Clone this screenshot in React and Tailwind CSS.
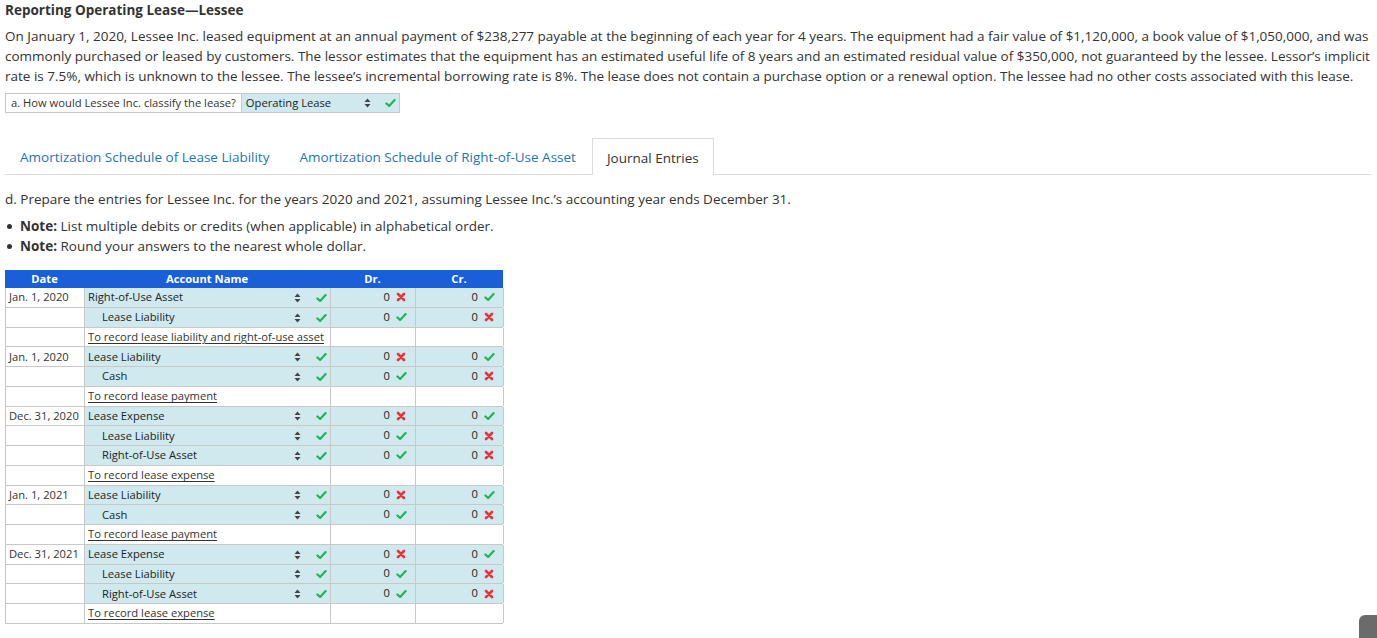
import React from 'react';

const Check = () => (
  <svg width="11" height="10" viewBox="0 0 12 10" className="inline-block">
    <path d="M1.5 5.5 L4.5 8.2 L10.5 1.8" fill="none" stroke="#22b455" strokeWidth="2.4" strokeLinecap="round" strokeLinejoin="round" />
  </svg>
);

const Cross = () => (
  <svg width="10" height="10" viewBox="0 0 10 10" className="inline-block">
    <path d="M2 2 L8 8 M8 2 L2 8" fill="none" stroke="#e8323c" strokeWidth="2.6" strokeLinecap="round" />
  </svg>
);

const Arrows = () => (
  <svg width="7" height="10" viewBox="0 0 7 10" className="inline-block">
    <path d="M3.5 0.5 L6.5 4 L0.5 4 Z" fill="#444" />
    <path d="M3.5 9.5 L6.5 6 L0.5 6 Z" fill="#444" />
  </svg>
);

const entries = [
  {
    date: 'Jan. 1, 2020',
    lines: [
      { name: 'Right-of-Use Asset', indent: false, dr: 'x', cr: 'v' },
      { name: 'Lease Liability', indent: true, dr: 'v', cr: 'x' },
    ],
    memo: 'To record lease liability and right-of-use asset',
  },
  {
    date: 'Jan. 1, 2020',
    lines: [
      { name: 'Lease Liability', indent: false, dr: 'x', cr: 'v' },
      { name: 'Cash', indent: true, dr: 'v', cr: 'x' },
    ],
    memo: 'To record lease payment',
  },
  {
    date: 'Dec. 31, 2020',
    lines: [
      { name: 'Lease Expense', indent: false, dr: 'x', cr: 'v' },
      { name: 'Lease Liability', indent: true, dr: 'v', cr: 'x' },
      { name: 'Right-of-Use Asset', indent: true, dr: 'v', cr: 'x' },
    ],
    memo: 'To record lease expense',
  },
  {
    date: 'Jan. 1, 2021',
    lines: [
      { name: 'Lease Liability', indent: false, dr: 'x', cr: 'v' },
      { name: 'Cash', indent: true, dr: 'v', cr: 'x' },
    ],
    memo: 'To record lease payment',
  },
  {
    date: 'Dec. 31, 2021',
    lines: [
      { name: 'Lease Expense', indent: false, dr: 'x', cr: 'v' },
      { name: 'Lease Liability', indent: true, dr: 'v', cr: 'x' },
      { name: 'Right-of-Use Asset', indent: true, dr: 'v', cr: 'x' },
    ],
    memo: 'To record lease expense',
  },
];

const Mark = ({ type }) => (type === 'v' ? <Check /> : <Cross />);

const AmountCell = ({ mark }) => (
  <div className="h-full bg-[#cfe9ef] border-r border-[#c8c8c8] flex items-center justify-end pr-[8px] gap-[6px]">
    <span>0</span>
    <span className="w-[11px] flex items-center">
      <Mark type={mark} />
    </span>
  </div>
);

const rowCls = 'grid grid-cols-[79px_246px_85px_88px] h-[19.76px] border-b border-[#c8c8c8]';

const Bullet = () => (
  <span className="w-[15px] shrink-0 flex items-center pl-[2px]">
    <span className="w-[5px] h-[5px] rounded-full bg-[#333]" />
  </span>
);

export default function App() {
  return (
    <div className="relative w-[1377px] h-[638px] overflow-hidden bg-white text-[#333] font-['Open_Sans',sans-serif] pl-[5px] pr-[6px]">
      <h1 className="text-[13.5px] font-bold leading-[20px]">Reporting Operating Lease—Lessee</h1>
      <p className="text-[13.5px] leading-[20px] mt-[6px]">
        On January 1, 2020, Lessee Inc. leased equipment at an annual payment of $238,277 payable at the beginning of each year for 4 years. The equipment had a fair value of $1,120,000, a book value of $1,050,000, and was commonly purchased or leased by customers. The lessor estimates that the equipment has an estimated useful life of 8 years and an estimated residual value of $350,000, not guaranteed by the lessee. Lessor’s implicit rate is 7.5%, which is unknown to the lessee. The lessee’s incremental borrowing rate is 8%. The lease does not contain a purchase option or a renewal option. The lessee had no other costs associated with this lease.
      </p>

      <div className="mt-[7px] flex h-[20px] w-[395px] border border-[#c8c8c8] text-[11.2px]">
        <div className="px-[5px] flex items-center border-r border-[#c8c8c8] shrink-0 whitespace-nowrap">a. How would Lessee Inc. classify the lease?</div>
        <div className="flex-1 bg-[#cfe9ef] flex items-center pl-[4px] text-[#222]">
          <span className="flex-1">Operating Lease</span>
          <span className="mr-[14px] flex items-center"><Arrows /></span>
          <span className="mr-[3px] flex items-center"><Check /></span>
        </div>
      </div>

      <div className="mt-[25px] flex items-end h-[37px] border-b border-[#dcdcdc] text-[13.5px]">
        <div className="pl-[15px] pr-[15px] h-full flex items-center pt-[3px] text-[#1f74b8]">Amortization Schedule of Lease Liability</div>
        <div className="pl-[15px] pr-[16px] h-full flex items-center pt-[3px] text-[#1f74b8]">Amortization Schedule of Right-of-Use Asset</div>
        <div className="px-[14px] h-[37px] flex items-center pt-[3px] border border-b-0 border-[#dcdcdc] bg-white -mb-px text-[#333]">Journal Entries</div>
      </div>

      <p className="text-[13.5px] leading-[20px] mt-[14px]">d. Prepare the entries for Lessee Inc. for the years 2020 and 2021, assuming Lessee Inc.’s accounting year ends December 31.</p>
      <ul className="mt-[7px] text-[13.5px] leading-[20px]">
        <li className="flex"><Bullet /><span><b className="font-bold">Note:</b> List multiple debits or credits (when applicable) in alphabetical order.</span></li>
        <li className="flex"><Bullet /><span><b className="font-bold">Note:</b> Round your answers to the nearest whole dollar.</span></li>
      </ul>

      <div className="mt-[14px] w-[498px] text-[11.2px] text-[#222]">
        <div className="grid grid-cols-[79px_246px_85px_88px] h-[18px] bg-[#1a5fd8] text-white font-bold">
          <div className="flex items-center justify-center">Date</div>
          <div className="flex items-center justify-center">Account Name</div>
          <div className="flex items-center justify-center">Dr.</div>
          <div className="flex items-center justify-center">Cr.</div>
        </div>
        <div className="border-l border-[#c8c8c8]">
          {entries.map((e, i) => (
            <React.Fragment key={i}>
              {e.lines.map((l, j) => (
                <div key={j} className={rowCls}>
                  <div className="flex items-center pl-[3px] pt-[1px] border-r border-[#c8c8c8] text-[#333]">{j === 0 ? e.date : ''}</div>
                  <div className="bg-[#cfe9ef] border-r border-[#c8c8c8] flex items-center pl-[3px] pt-[1px]">
                    <span className={`flex-1 ${l.indent ? 'pl-[14px]' : ''}`}>{l.name}</span>
                    <span className="mr-[15px] flex items-center"><Arrows /></span>
                    <span className="mr-[3px] flex items-center"><Check /></span>
                  </div>
                  <AmountCell mark={l.dr} />
                  <AmountCell mark={l.cr} />
                </div>
              ))}
              <div className={rowCls}>
                <div className="border-r border-[#c8c8c8]" />
                <div className="border-r border-[#c8c8c8] flex items-center pl-[3px] pt-[1px] text-[#333] underline underline-offset-2">{e.memo}</div>
                <div className="border-r border-[#c8c8c8]" />
                <div className="border-r border-[#c8c8c8]" />
              </div>
            </React.Fragment>
          ))}
        </div>
      </div>

      <div className="absolute left-[1359px] top-[615px] w-[40px] h-[40px] rounded-[6px] bg-[#6b6b6b]" />
    </div>
  );
}
